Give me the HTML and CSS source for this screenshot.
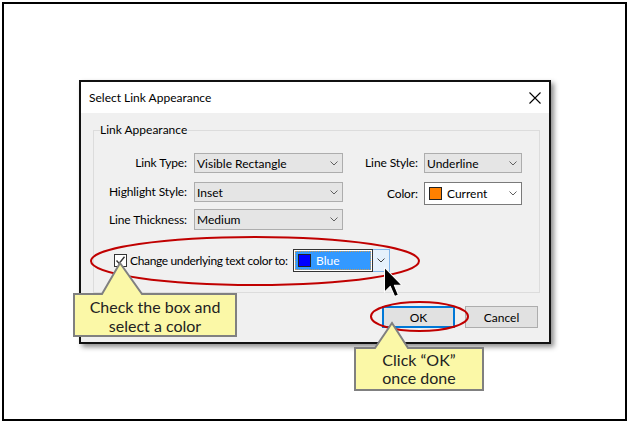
FILE: index.html
```html
<!DOCTYPE html>
<html>
<head>
<meta charset="utf-8">
<title>Select Link Appearance</title>
<link rel="stylesheet" href="styles.css">
</head>
<body>
<div class="stage">
  <div class="frame">
    <div class="dialog">
      <div class="titlebar">
        <span class="title">Select Link Appearance</span>
        <svg class="close" width="12" height="12" viewBox="0 0 12 12"><path d="M0.5 0.5 L11.5 11.5 M11.5 0.5 L0.5 11.5" stroke="#000" stroke-width="1.1" fill="none"/></svg>
      </div>
      <div class="body">
        <div class="group">
          <span class="legend">Link Appearance</span>
          <div class="grid">
            <span class="lbl">Link Type:</span>
            <div class="select"><span>Visible Rectangle</span><svg class="chev" width="8" height="5" viewBox="0 0 8 5"><path d="M0.5 0.5 L4 4 L7.5 0.5" stroke="#606060" fill="none"/></svg></div>
            <span class="lbl lbl2">Line Style:</span>
            <div class="select"><span>Underline</span><svg class="chev" width="8" height="5" viewBox="0 0 8 5"><path d="M0.5 0.5 L4 4 L7.5 0.5" stroke="#606060" fill="none"/></svg></div>

            <span class="lbl">Highlight Style:</span>
            <div class="select"><span>Inset</span><svg class="chev" width="8" height="5" viewBox="0 0 8 5"><path d="M0.5 0.5 L4 4 L7.5 0.5" stroke="#606060" fill="none"/></svg></div>
            <span class="lbl lbl2 lblc">Color:</span>
            <div class="combo"><span class="swatch orange"></span><span class="ctext">Current</span><svg class="chev" width="8" height="5" viewBox="0 0 8 5"><path d="M0.5 0.5 L4 4 L7.5 0.5" stroke="#606060" fill="none"/></svg></div>

            <span class="lbl lbl3">Line Thickness:</span>
            <div class="select tall"><span>Medium</span><svg class="chev" width="8" height="5" viewBox="0 0 8 5"><path d="M0.5 0.5 L4 4 L7.5 0.5" stroke="#606060" fill="none"/></svg></div>
          </div>
          <div class="checkrow">
            <span class="checkbox"><svg width="11" height="11" viewBox="0 0 11 11"><path d="M1.5 5.5 L4.2 8.5 L9.5 1.8" stroke="#333" stroke-width="1.4" fill="none"/></svg></span>
            <span class="checklabel">Change underlying text color to:</span>
            <div class="bluecombo">
              <div class="bluemain"><div class="bluesel"><span class="swatch blue"></span><span class="btext">Blue</span></div></div>
              <div class="bluebtn"><svg width="8" height="5" viewBox="0 0 8 5"><path d="M0.5 0.5 L4 4 L7.5 0.5" stroke="#404040" fill="none"/></svg></div>
            </div>
          </div>
        </div>
        <div class="buttons">
          <div class="btn default">OK</div>
          <div class="btn">Cancel</div>
        </div>
      </div>
    </div>
  </div>

  <svg class="overlay" width="630" height="424" viewBox="0 0 630 424">
    <ellipse cx="255" cy="261" rx="164" ry="24" fill="none" stroke="#c00000" stroke-width="2"/>
    <ellipse cx="419.5" cy="316.5" rx="48.5" ry="14.5" fill="none" stroke="#c00000" stroke-width="2"/>
    <path transform="translate(384.5 267.5) scale(1.45)" d="M0 0 L0 17 L4 13 L7 20 L9.6 19 L6.8 12.2 L12 12.2 Z" fill="#000" stroke="#fff" stroke-width="0.7" stroke-linejoin="round"/>
    <path d="M74 294 L102 294 L120 263 L142 294 L236 294 L236 336 L74 336 Z" fill="#fbf8a7" stroke="#808080" stroke-width="2" stroke-linejoin="miter"/>
    <path d="M355 348 L375 348 L392 323 L408 348 L483 348 L483 390 L355 390 Z" fill="#fbf8a7" stroke="#808080" stroke-width="2" stroke-linejoin="miter"/>
  </svg>
  <div class="callout c1">Check the box and<br>select a color</div>
  <div class="callout c2">Click “OK”<br>once done</div>
</div>
</body>
</html>
```

FILE: styles.css
```css
* { box-sizing: border-box; }
html, body { margin: 0; padding: 0; background: #fff; }
body { font-family: Lato, "Noto Sans", sans-serif; font-size: 12px; color: #000; }

.stage { position: relative; width: 630px; height: 424px; overflow: hidden; }

.frame {
  margin: 2px 0 0 2px;
  width: 625px;
  height: 419px;
  border: 2px solid #000;
  padding: 76px 0 0 75px;
}

.dialog {
  width: 472px;
  height: 264px;
  border: 2px solid #111;
  background: #f0f0f0;
  box-shadow: 3px 3px 5px rgba(0,0,0,0.45);
}

.titlebar {
  height: 31px;
  background: #fff;
  display: flex;
  align-items: center;
  justify-content: space-between;
  padding: 0 8px 0 8px;
}
.title { font-size: 12px; }
.close { display: block; }

.body { padding: 17px 9px 14px 12px; }

.group {
  position: relative;
  border: 1px solid #dcdcdc;
  padding: 0 0 20px 0;
}
.legend {
  position: absolute;
  top: -9px;
  left: 6px;
  line-height: 16px;
  background: #f0f0f0;
  padding: 0 1px 0 0;
}

.grid {
  margin-top: 22px;
  display: grid;
  grid-template-columns: 100px 149px 81px 98px;
  grid-template-rows: 29px 27px 21px;
  align-items: start;
}
.lbl { text-align: right; padding-right: 7px; line-height: 20px; white-space: nowrap; letter-spacing: -0.1px; }
.lbl2 { padding-right: 6px; }
.lblc { line-height: 23px; }
.lbl3 { line-height: 21px; }

.select {
  height: 20px;
  border: 1px solid #adadad;
  background: #e5e5e5;
  display: flex;
  align-items: center;
  justify-content: space-between;
  padding: 0 4px 0 2px;
  white-space: nowrap;
}
.select.tall { height: 21px; }
.chev { display: block; flex: none; }

.combo {
  height: 23px;
  border: 1px solid #7a7a7a;
  background: #fff;
  display: flex;
  align-items: center;
  padding: 0 4px 0 4px;
}
.ctext { flex: 1; padding-left: 5px; }

.swatch { display: block; width: 13px; height: 13px; border: 1px solid #222; flex: none; }
.swatch.orange { background: #ff8000; }
.swatch.blue { background: #0000ff; }

.checkrow {
  margin-top: 19px;
  height: 23px;
  display: flex;
  align-items: center;
  padding-left: 20px;
}
.checkbox {
  width: 13px;
  height: 13px;
  border: 1px solid #333;
  background: #fff;
  display: flex;
  align-items: center;
  justify-content: center;
  flex: none;
}
.checkbox svg { display: block; }
.checklabel {
  flex: 0 0 166px;
  min-width: 0;
  padding-left: 3px;
  white-space: nowrap;
  letter-spacing: -0.35px;
}

.bluecombo { display: flex; height: 23px; flex: none; }
.bluemain {
  width: 80px;
  height: 23px;
  border: 1px solid #333;
  background: #fff;
  padding: 1px;
}
.bluesel {
  height: 100%;
  background: #3399ff;
  border: 1px dotted #c89a55;
  display: flex;
  align-items: center;
  padding-left: 2px;
}
.btext { color: #fff; padding-left: 5px; }
.bluebtn {
  width: 17px;
  height: 23px;
  border: 1px solid #7eb4ea;
  border-left: none;
  background: #e5f1fb;
  display: flex;
  align-items: center;
  justify-content: center;
}
.bluebtn svg { display: block; }

.buttons {
  margin-top: 13px;
  display: flex;
  justify-content: flex-end;
  gap: 10px;
  padding-right: 2px;
}
.btn {
  width: 73px;
  height: 22px;
  border: 1px solid #adadad;
  background: #e1e1e1;
  display: flex;
  align-items: center;
  justify-content: center;
}
.btn.default { border: 2px solid #0078d7; }

.overlay { position: absolute; left: 0; top: 0; pointer-events: none; }

.callout {
  position: absolute;
  display: flex;
  align-items: center;
  justify-content: center;
  text-align: center;
  font-size: 16px;
  line-height: 19px;
  color: #222;
}
.c1 { left: 74px; top: 295px; width: 162px; height: 42px; }
.c2 { left: 355px; top: 348px; width: 128px; height: 42px; line-height: 18px; }
```
